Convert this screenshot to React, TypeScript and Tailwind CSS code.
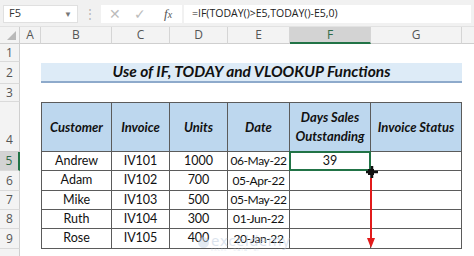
import React from "react"

const ui = { fontFamily: '"Open Sans", "Noto Sans", sans-serif' }
const cell = { fontFamily: 'Lato, "Liberation Sans", sans-serif' }

const colW = ["w-[21px]", "w-[71px]", "w-[58px]", "w-[58px]", "w-[62px]", "w-[81px]", "w-[91px]"]
const letters = ["A", "B", "C", "D", "E", "F", "G"]

const rows = [
  { n: 5, h: "h-[19px]", v: ["Andrew", "IV101", "1000", "06-May-22", "39", ""] },
  { n: 6, h: "h-[20px]", v: ["Adam", "IV102", "700", "05-Apr-22", "", ""] },
  { n: 7, h: "h-[19px]", v: ["Mike", "IV103", "500", "05-May-22", "", ""] },
  { n: 8, h: "h-[19px]", v: ["Ruth", "IV104", "300", "01-Jun-22", "", ""] },
  { n: 9, h: "h-[20px]", v: ["Rose", "IV105", "400", "20-Jan-22", "", ""] },
]

function RowHead({ n, active }: { n?: number; active?: boolean }) {
  return (
    <div
      style={ui}
      className={
        "w-[20px] shrink-0 flex items-center justify-center text-[12px] border-b border-[#dadada] " +
        (active ? "bg-[#d3d3d3] text-[#2e6b47] border-r-2 border-r-[#217346]" : "bg-[#f3f3f3] text-[#555] border-r border-r-[#cfcfcf]")
      }
    >
      {n}
    </div>
  )
}

export default function App() {
  return (
    <div className="relative w-[474px] h-[256px] overflow-hidden bg-white select-none">
      {/* formula bar */}
      <div style={ui} className="h-[27px] bg-[#f1f1f1] flex items-center px-[3px] pt-px border-b border-[#e2e2e2]">
        <div className="w-[75px] h-[18px] bg-white border border-[#e0e0e0] flex items-center justify-between px-[5px] text-[11px] text-[#333]">
          <span>F5</span>
          <span className="text-[8px] text-[#777]">▼</span>
        </div>
        <div className="w-[23px] text-center text-[#b5b5b5] text-[12px] leading-none">⋮</div>
        <div className="w-[81px] h-[18px] bg-white flex items-center text-[#bcbcbc] text-[14px]">
          <span className="ml-[8px] font-light">✕</span>
          <span className="ml-[13px]">✓</span>
          <span style={{ fontFamily: '"Liberation Serif", serif' }} className="ml-[18px] italic text-[#555] text-[13px]">
            f<span className="text-[10px]">x</span>
          </span>
        </div>
        <div className="flex-1 h-[18px] ml-[2px] bg-white flex items-center pl-[8px] text-[10.5px] text-[#222]">
          =IF(TODAY()&gt;E5,TODAY()-E5,0)
        </div>
      </div>

      {/* column headers */}
      <div style={ui} className="flex h-[17px] text-[12px] text-[#555]">
        <div className="w-[20px] shrink-0 bg-[#f3f3f3] border-r border-b border-[#cfcfcf] relative">
          <div className="absolute right-[3px] bottom-[3px] w-0 h-0 border-l-[9px] border-l-transparent border-b-[9px] border-b-[#b9b9b9]" />
        </div>
        {letters.map((l, i) => (
          <div
            key={l}
            className={
              colW[i] +
              " shrink-0 flex items-center justify-center border-r border-[#d5d5d5] " +
              (l === "F" ? "bg-[#d3d3d3] text-[#2e6b47] border-b-2 border-b-[#217346]" : "bg-[#f3f3f3] border-b border-b-[#cfcfcf]")
            }
          >
            {l}
          </div>
        ))}
        <div className="flex-1 bg-[#f3f3f3] border-b border-[#cfcfcf]" />
      </div>

      {/* row 1 */}
      <div className="flex h-[18px]">
        <RowHead n={1} />
      </div>

      {/* row 2: title */}
      <div className="flex h-[22px]">
        <RowHead n={2} />
        <div className="w-[21px] shrink-0" />
        <div
          style={cell}
          className="w-[421px] shrink-0 mt-px h-[20px] bg-[#ddebf7] border-b-2 border-[#8eaacb] flex items-center justify-center text-[15.5px] font-bold italic text-[#111] whitespace-nowrap"
        >
          Use of IF, TODAY and VLOOKUP Functions
        </div>
      </div>

      {/* row 3 */}
      <div className="flex h-[18px]">
        <RowHead n={3} />
      </div>

      {/* row 4: table header */}
      <div className="flex h-[50px]">
        <div style={ui} className="w-[20px] shrink-0 flex items-end justify-center pb-[2px] text-[12px] bg-[#f3f3f3] text-[#555] border-r border-b border-[#cfcfcf]">
          4
        </div>
        <div className="w-[21px] shrink-0" />
        {["Customer", "Invoice", "Units", "Date", "Days Sales Outstanding", "Invoice Status"].map((t, i) => (
          <div
            key={t}
            style={cell}
            className={
              colW[i + 1] +
              " shrink-0 bg-[#bdd7ee] border-t border-r border-b border-[#5b5b5b] flex items-center justify-center text-center text-[13px] leading-[19px] font-bold italic text-[#111] " +
              (i === 0 ? "border-l" : "") +
              (i === 4 ? " px-[8px]" : " whitespace-nowrap")
            }
          >
            {t}
          </div>
        ))}
      </div>

      {/* data rows */}
      {rows.map((r) => (
        <div key={r.n} className={"flex " + r.h}>
          <RowHead n={r.n} active={r.n === 5} />
          <div className="w-[21px] shrink-0" />
          {r.v.map((v, i) => (
            <div
              key={i}
              style={cell}
              className={
                colW[i + 1] +
                " shrink-0 relative border-r border-b border-[#5b5b5b] flex items-center justify-center whitespace-nowrap text-[#111] " +
                (i === 3 ? "text-[12px] tracking-[-0.4px] " : "text-[12.5px] ") +
                (i === 0 ? "border-l" : "")
              }
            >
              {v}
              {r.n === 5 && i === 4 && <div className="absolute -left-px -top-px right-[-1px] bottom-[-1px] border-2 border-[#217346]" />}
            </div>
          ))}
        </div>
      ))}

      {/* row 10 */}
      <div className="flex h-[10px]">
        <RowHead />
      </div>

      {/* watermark */}
      <div className="absolute left-[198px] top-[233px] flex items-center gap-[2px] opacity-50 pointer-events-none">
        <div className="w-[11px] h-[11px] rounded-full bg-[#c9d6e6]" />
        <div className="flex flex-col leading-none">
          <span style={ui} className="text-[15px] text-[#b9c9dd] tracking-[0.5px]">exceldemy</span>
          <span style={ui} className="text-[4px] text-[#b9c9dd] tracking-[1px]">EXCEL · DATA · BI</span>
        </div>
      </div>

      {/* fill handle cursor and drag arrow */}
      <svg className="absolute left-0 top-0 pointer-events-none" width="474" height="256">
        <rect x="368" y="169" width="6" height="6" fill="#111" />
        <line x1="372" y1="166" x2="372" y2="178" stroke="#111" strokeWidth="2.5" />
        <line x1="366" y1="172" x2="378" y2="172" stroke="#111" strokeWidth="2.5" />
        <line x1="371" y1="178" x2="371" y2="240" stroke="#e21b1b" strokeWidth="2" />
        <polygon points="367,238 375,238 371,248" fill="#e21b1b" />
      </svg>
    </div>
  )
}
